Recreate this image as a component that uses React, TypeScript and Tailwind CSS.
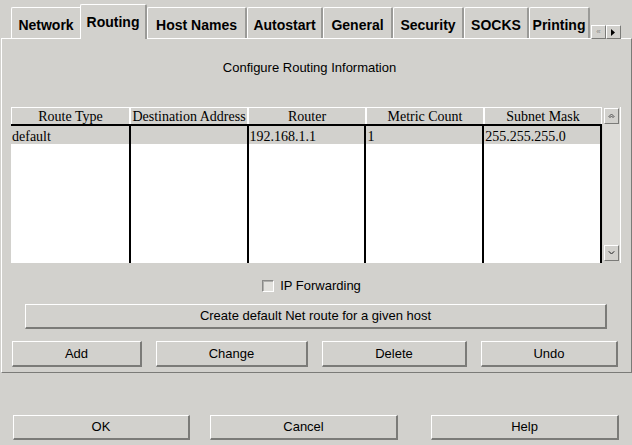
import React from "react";

const bg = "bg-[#d2d1cd]";

function Btn({ label, className = "" }: { label: string; className?: string }) {
  return (
    <div
      className={`flex items-center justify-center border-t border-l border-t-white border-l-white border-r-2 border-b-2 border-r-[#7b7b78] border-b-[#7b7b78] ${bg} text-[13px] text-black ${className}`}
    >
      {label}
    </div>
  );
}

const tabs = ["Network", "Routing", "Host Names", "Autostart", "General", "Security", "SOCKS", "Printing"];
const tabW = [71, 67, 100, 76, 70, 71, 65, 61];

const cols = [
  { h: "Route Type", w: 118, v: "default" },
  { h: "Destination Address", w: 118, v: "" },
  { h: "Router", w: 118, v: "192.168.1.1" },
  { h: "Metric Count", w: 118, v: "1" },
  { h: "Subnet Mask", w: 118, v: "255.255.255.0" },
];

export default function App() {
  return (
    <div
      className={`w-[632px] h-[445px] ${bg} overflow-hidden relative select-none`}
      style={{ fontFamily: '"Liberation Sans", Arial, sans-serif' }}
    >
      {/* Tabs row */}
      <div className="flex items-end h-[38px] pl-[11px]">
        {tabs.map((t, i) => {
          const sel = i === 1;
          return (
            <div
              key={t}
              style={{ width: tabW[i] }}
              className={`relative flex items-center justify-center font-bold text-[14px] text-black border-t border-l border-t-white border-l-white border-r-2 border-r-[#9a9a97] rounded-t-[2px] ${bg} ${
                sel ? "h-[35px] z-10 mb-[-1px] pt-[1px] -ml-[2px]" : "h-[31px] pt-[5px]"
              }`}
            >
              {t}
            </div>
          );
        })}
        <div className="flex ml-[1px] h-[14px] self-end mb-[-1px]">
          <div className={`w-[15px] h-[14px] border border-t-white border-l-white border-r-[#7b7b78] border-b-[#7b7b78] ${bg} flex items-center justify-center text-[8px] text-[#8a8a88]`}>
            «
          </div>
          <div className={`w-[15px] h-[14px] border border-t-white border-l-white border-r-[#7b7b78] border-b-[#7b7b78] ${bg} flex items-center justify-center`}>
            <svg width="5" height="7" viewBox="0 0 5 7"><path d="M0 0 L4 3.5 L0 7 Z" fill="#000" /></svg>
          </div>
        </div>
      </div>

      {/* Panel */}
      <div className="ml-[1px] w-[631px] h-[335px] border-t border-l border-t-white border-l-white border-r border-b border-r-[#7b7b78] border-b-[#7b7b78] flex flex-col">
        <div className="h-[22px] mt-[19px] text-center text-[13px] text-black pr-[14px]">Configure Routing Information</div>

        {/* Table */}
        <div className="flex mt-[27px] ml-[9px] h-[156px]">
          <div className="w-[591px] bg-white flex flex-col" style={{ fontFamily: '"Liberation Serif", "Times New Roman", serif' }}>
            <div className="flex h-[19px] border-b-2 border-b-black">
              {cols.map((c, i) => (
                <div
                  key={c.h}
                  style={{ width: c.w }}
                  className={`${bg} border-t border-l border-t-white border-l-white ${i > 0 ? "border-l-[2px] border-l-black" : ""} flex items-center justify-center pt-[2px] text-[14px] leading-none text-black`}
                >
                  {c.h}
                </div>
              ))}
            </div>
            <div className="flex flex-1">
              {cols.map((c, i) => (
                <div
                  key={c.h}
                  style={{ width: c.w }}
                  className={`flex flex-col ${i > 0 ? "border-l-[2px] border-l-black" : ""}`}
                >
                  <div className={`h-[18px] ${bg} text-[14px] leading-[22px] pl-[1px] text-black`}>{c.v}</div>
                  <div className="flex-1 bg-white" />
                </div>
              ))}
              <div className="w-[2px] bg-black" />
            </div>
          </div>
          <div className={`w-[18px] ml-[1px] flex flex-col border-r border-r-white ${bg}`}>
            <div className="h-[16px] mx-[1px] mt-[1px] border border-t-white border-l-white border-r-[#7b7b78] border-b-[#7b7b78] flex items-center justify-center">
              <svg width="7" height="6" viewBox="0 0 7 6"><path d="M0.5 4 L3.5 1 L6.5 4 M1.5 5 L3.5 3 L5.5 5" stroke="#555" strokeWidth="1" fill="none" /></svg>
            </div>
            <div className="flex-1 bg-[#dcdbd7]" />
            <div className="h-[16px] mx-[1px] mb-[2px] border border-t-white border-l-white border-r-[#7b7b78] border-b-[#7b7b78] flex items-center justify-center">
              <svg width="7" height="6" viewBox="0 0 7 6"><path d="M0.5 1 L3.5 4 L6.5 1 M1.5 2 L3.5 4 L5.5 2" stroke="#555" strokeWidth="1" fill="none" /></svg>
            </div>
          </div>
        </div>

        {/* IP Forwarding */}
        <div className="flex items-center justify-center mt-[15px] h-[16px] pr-[10px]">
          <div className="w-[12px] h-[12px] border border-t-[#8a8a88] border-l-[#8a8a88] border-r-white border-b-white bg-[#e2e1dd] mr-[6px] shadow-[inset_1px_1px_0_#b0b0ad]" />
          <span className="text-[13px] text-black">IP Forwarding</span>
        </div>

        <Btn label="Create default Net route for a given host" className="mt-[10px] ml-[23px] w-[582px] h-[25px]" />

        <div className="flex mt-[12px] ml-[10px] h-[26px]">
          <Btn label="Add" className="w-[130px] h-[26px]" />
          <Btn label="Change" className="w-[152px] h-[26px] ml-[14px]" />
          <Btn label="Delete" className="w-[145px] h-[26px] ml-[14px]" />
          <Btn label="Undo" className="w-[137px] h-[26px] ml-[14px]" />
        </div>
      </div>

      {/* Bottom buttons */}
      <div className="flex mt-[42px] ml-[13px]">
        <Btn label="OK" className="w-[177px] h-[25px]" />
        <Btn label="Cancel" className="w-[188px] h-[25px] ml-[20px]" />
        <Btn label="Help" className="w-[188px] h-[25px] ml-[33px]" />
      </div>
    </div>
  );
}
